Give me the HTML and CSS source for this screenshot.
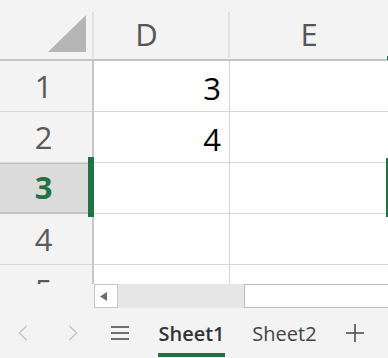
FILE: index.html
```html
<!DOCTYPE html>
<html>
<head>
<meta charset="utf-8">
<link rel="stylesheet" href="styles.css">
</head>
<body>
<div class="grid">
  <div class="hdr">
    <div class="corner">
      <svg class="tri" width="38" height="37" viewBox="0 0 38 37"><polygon points="0,37 38,37 38,0" fill="#b5b5b5"/></svg>
    </div>
    <div class="hsep"></div>
    <div class="colh colh-d">D</div>
    <div class="hsep"></div>
    <div class="colh colh-e">E</div>
  </div>
  <div class="row"><div class="rh">1</div><div class="c cd">3</div><div class="c ce"></div></div>
  <div class="row"><div class="rh">2</div><div class="c cd">4</div><div class="c ce"></div></div>
  <div class="row"><div class="rh rh-sel">3</div><div class="c cd"></div><div class="c ce"></div></div>
  <div class="row"><div class="rh">4</div><div class="c cd"></div><div class="c ce"></div></div>
  <div class="row"><div class="rh">5</div><div class="c cd"></div><div class="c ce"></div></div>
  <div class="sel-left"></div>
  <div class="sel-right"></div>
  <div class="hdr-mark"></div>
</div>
<div class="hscroll">
  <div class="hs-pad"></div>
  <div class="hs-btn">
    <svg width="8" height="9" viewBox="0 0 8 9"><polygon points="0,4.5 7,0 7,9" fill="#6b6b6b"/></svg>
  </div>
  <div class="hs-thumb"></div>
  <div class="hs-track"></div>
</div>
<div class="tabs">
  <svg class="nav nav-prev" width="10" height="16" viewBox="0 0 10 16"><polyline points="8.5,1 1.5,8 8.5,15" fill="none" stroke="#c3c3c3" stroke-width="1.4"/></svg>
  <svg class="nav nav-next" width="10" height="16" viewBox="0 0 10 16"><polyline points="1.5,1 8.5,8 1.5,15" fill="none" stroke="#c3c3c3" stroke-width="1.4"/></svg>
  <svg class="menu" width="18" height="14" viewBox="0 0 18 14"><path d="M0 1H18M0 7H18M0 13H18" stroke="#444" stroke-width="1.5"/></svg>
  <div class="tab tab-active">Sheet1</div>
  <div class="tab">Sheet2</div>
  <svg class="plus" width="18" height="18" viewBox="0 0 18 18"><path d="M9 0V18M0 9H18" stroke="#444" stroke-width="1.5"/></svg>
</div>
</body>
</html>
```
FILE: styles.css
```css
html, body {
  margin: 0;
  padding: 0;
}
body {
  width: 388px;
  height: 358px;
  overflow: hidden;
  background: #f3f3f3;
  font-family: "Open Sans", "Noto Sans", sans-serif;
}
.grid {
  position: relative;
  height: 284px;
  overflow: hidden;
  background: #fff;
}
.hdr {
  display: flex;
  height: 61px;
  box-sizing: border-box;
  border-bottom: 2px solid #c3c3c3;
  background: #f3f3f3;
}
.corner {
  width: 92px;
  display: flex;
  align-items: flex-start;
}
.tri {
  margin-left: 48px;
  margin-top: 15px;
}
.hsep {
  width: 2px;
  margin: 12px 0 1px;
  background: #e0e0e0;
}
.colh {
  display: flex;
  align-items: center;
  justify-content: center;
  font-size: 31px;
  line-height: 1;
  color: #555;
  padding-top: 9px;
  box-sizing: border-box;
}
.colh-d {
  width: 134px;
  padding-right: 29px;
}
.colh-e {
  flex: 1;
}
.row {
  display: flex;
  height: 51px;
}
.rh {
  width: 94px;
  box-sizing: border-box;
  border-right: 2px solid #c6c6c6;
  border-bottom: 1px solid #d8d8d8;
  background: #f3f3f3;
  display: flex;
  align-items: center;
  justify-content: center;
  padding-right: 5px;
  font-size: 31px;
  line-height: 1;
  color: #5a5a5a;
}
.rh-sel {
  background: #dbdbdb;
  color: #217346;
  font-weight: 700;
  border-bottom: 2px solid #c2c2c2;
  box-shadow: inset 0 1px 0 #c2c2c2;
}
.c {
  box-sizing: border-box;
  border-bottom: 1px solid #d6d6d6;
  font-size: 31px;
  line-height: 1;
  color: #000;
}
.cd {
  width: 136px;
  border-right: 1px solid #d6d6d6;
  display: flex;
  align-items: center;
  justify-content: flex-end;
  padding-right: 8px;
  padding-top: 4px;
}
.ce {
  flex: 1;
}
.sel-left {
  position: absolute;
  left: 88px;
  top: 157px;
  width: 6px;
  height: 60px;
  background: #217346;
}
.sel-right {
  position: absolute;
  left: 386px;
  top: 158px;
  width: 2px;
  height: 59px;
  background: #217346;
}
.hdr-mark {
  position: absolute;
  left: 387px;
  top: 56px;
  width: 1px;
  height: 4px;
  background: #217346;
}
.hscroll {
  display: flex;
  height: 24px;
  background: #f3f3f3;
}
.hs-pad {
  width: 94px;
}
.hs-btn {
  width: 24px;
  box-sizing: border-box;
  border: 1px solid #c6c6c6;
  background: #fff;
  display: flex;
  align-items: center;
  justify-content: center;
}
.hs-btn svg {
  margin-left: -4px;
}
.hs-thumb {
  width: 126px;
  background: #e6e6e6;
}
.hs-track {
  flex: 1;
  box-sizing: border-box;
  border: 1px solid #bdbdbd;
  border-right: none;
  background: #fff;
}
.tabs {
  display: flex;
  align-items: center;
  height: 50px;
  background: #f3f3f3;
}
.nav-prev {
  margin-left: 18px;
}
.nav-next {
  margin-left: 40px;
}
.menu {
  margin-left: 33px;
}
.tab {
  align-self: stretch;
  width: 67px;
  box-sizing: border-box;
  display: flex;
  align-items: center;
  justify-content: center;
  font-size: 20px;
  color: #444;
  padding-top: 1px;
}
.tab-active {
  margin-left: 29px;
  font-weight: 600;
  color: #333;
  border-bottom: 4px solid #217346;
  margin-bottom: 1px;
  padding-top: 5px;
}
.tab-active + .tab {
  margin-left: 26px;
}
.plus {
  margin-left: 28px;
}
```
